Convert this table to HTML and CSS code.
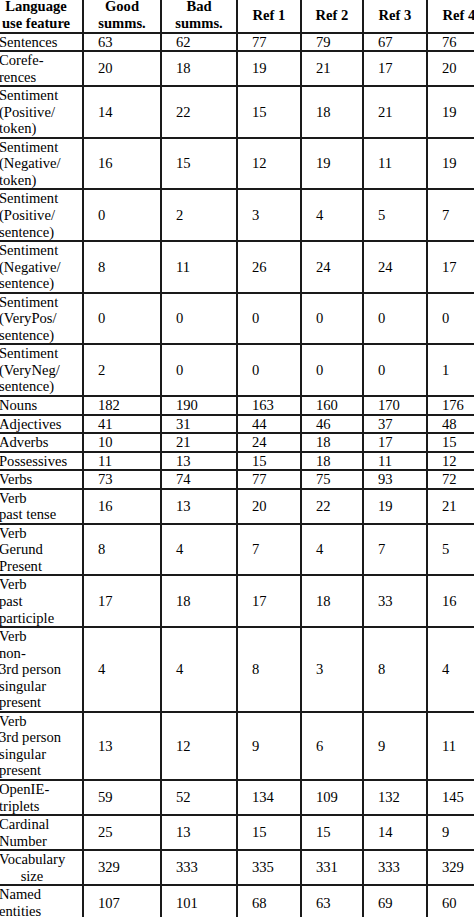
FILE: index.html
```html
<!DOCTYPE html>
<html lang="en">
<head>
<meta charset="utf-8">
<title>Language use features</title>
<link rel="stylesheet" href="styles.css">
</head>
<body>
<table class="stats">
  <colgroup>
    <col class="c-feat">
    <col class="c-good">
    <col class="c-bad">
    <col class="c-ref">
    <col class="c-ref2">
    <col class="c-ref">
    <col class="c-ref">
  </colgroup>
  <thead>
    <tr>
      <th class="feat-head">Language<br>use feature</th>
      <th>Good<br>summs.</th>
      <th>Bad<br>summs.</th>
      <th>Ref 1</th>
      <th>Ref 2</th>
      <th>Ref 3</th>
      <th>Ref 4</th>
    </tr>
  </thead>
  <tbody>
    <tr><td class="feat">Sentences</td><td>63</td><td>62</td><td>77</td><td>79</td><td>67</td><td>76</td></tr>
    <tr><td class="feat">Corefe-<br>rences</td><td>20</td><td>18</td><td>19</td><td>21</td><td>17</td><td>20</td></tr>
    <tr><td class="feat">Sentiment<br>(Positive/<br>token)</td><td>14</td><td>22</td><td>15</td><td>18</td><td>21</td><td>19</td></tr>
    <tr><td class="feat">Sentiment<br>(Negative/<br>token)</td><td>16</td><td>15</td><td>12</td><td>19</td><td>11</td><td>19</td></tr>
    <tr><td class="feat">Sentiment<br>(Positive/<br>sentence)</td><td>0</td><td>2</td><td>3</td><td>4</td><td>5</td><td>7</td></tr>
    <tr><td class="feat">Sentiment<br>(Negative/<br>sentence)</td><td>8</td><td>11</td><td>26</td><td>24</td><td>24</td><td>17</td></tr>
    <tr><td class="feat">Sentiment<br>(VeryPos/<br>sentence)</td><td>0</td><td>0</td><td>0</td><td>0</td><td>0</td><td>0</td></tr>
    <tr><td class="feat">Sentiment<br>(VeryNeg/<br>sentence)</td><td>2</td><td>0</td><td>0</td><td>0</td><td>0</td><td>1</td></tr>
    <tr><td class="feat">Nouns</td><td>182</td><td>190</td><td>163</td><td>160</td><td>170</td><td>176</td></tr>
    <tr><td class="feat">Adjectives</td><td>41</td><td>31</td><td>44</td><td>46</td><td>37</td><td>48</td></tr>
    <tr><td class="feat">Adverbs</td><td>10</td><td>21</td><td>24</td><td>18</td><td>17</td><td>15</td></tr>
    <tr><td class="feat">Possessives</td><td>11</td><td>13</td><td>15</td><td>18</td><td>11</td><td>12</td></tr>
    <tr><td class="feat">Verbs</td><td>73</td><td>74</td><td>77</td><td>75</td><td>93</td><td>72</td></tr>
    <tr><td class="feat">Verb<br>past tense</td><td>16</td><td>13</td><td>20</td><td>22</td><td>19</td><td>21</td></tr>
    <tr><td class="feat">Verb<br>Gerund<br>Present</td><td>8</td><td>4</td><td>7</td><td>4</td><td>7</td><td>5</td></tr>
    <tr><td class="feat">Verb<br>past<br>participle</td><td>17</td><td>18</td><td>17</td><td>18</td><td>33</td><td>16</td></tr>
    <tr><td class="feat">Verb<br>non-<br>3rd person<br>singular<br>present</td><td>4</td><td>4</td><td>8</td><td>3</td><td>8</td><td>4</td></tr>
    <tr><td class="feat">Verb<br>3rd person<br>singular<br>present</td><td>13</td><td>12</td><td>9</td><td>6</td><td>9</td><td>11</td></tr>
    <tr><td class="feat">OpenIE-<br>triplets</td><td>59</td><td>52</td><td>134</td><td>109</td><td>132</td><td>145</td></tr>
    <tr><td class="feat">Cardinal<br>Number</td><td>25</td><td>13</td><td>15</td><td>15</td><td>14</td><td>9</td></tr>
    <tr><td class="feat feat-center">Vocabulary<br>size</td><td>329</td><td>333</td><td>335</td><td>331</td><td>333</td><td>329</td></tr>
    <tr><td class="feat">Named<br>entities</td><td>107</td><td>101</td><td>68</td><td>63</td><td>69</td><td>60</td></tr>
  </tbody>
</table>
</body>
</html>
```
FILE: styles.css
```css
html, body {
  margin: 0;
  padding: 0;
  background: #ffffff;
  overflow: hidden;
}

body {
  font-family: "Liberation Serif", "Times New Roman", serif;
  font-size: 14.6px;
  color: #000000;
}

.stats {
  border-collapse: collapse;
  table-layout: fixed;
  width: 495px;
  margin: -3.6px 0 0 -5px;
  line-height: 16.55px;
}

.c-feat { width: 87px; }
.c-good { width: 78px; }
.c-bad  { width: 76px; }
.c-ref  { width: 64px; }
.c-ref2 { width: 62px; }

.stats th,
.stats td {
  border: 2px solid #1a1a1a;
  padding: 0;
  vertical-align: middle;
  white-space: nowrap;
  overflow: hidden;
}

.stats th {
  font-weight: bold;
  text-align: center;
}

.stats td {
  text-align: left;
  padding-left: 14px;
}

.stats .feat {
  padding-left: 2px;
}

.stats .feat-head {
  padding-left: 2px;
  padding-right: 9px;
}

.stats .feat-center {
  text-align: center;
  padding-right: 17px;
}
```
